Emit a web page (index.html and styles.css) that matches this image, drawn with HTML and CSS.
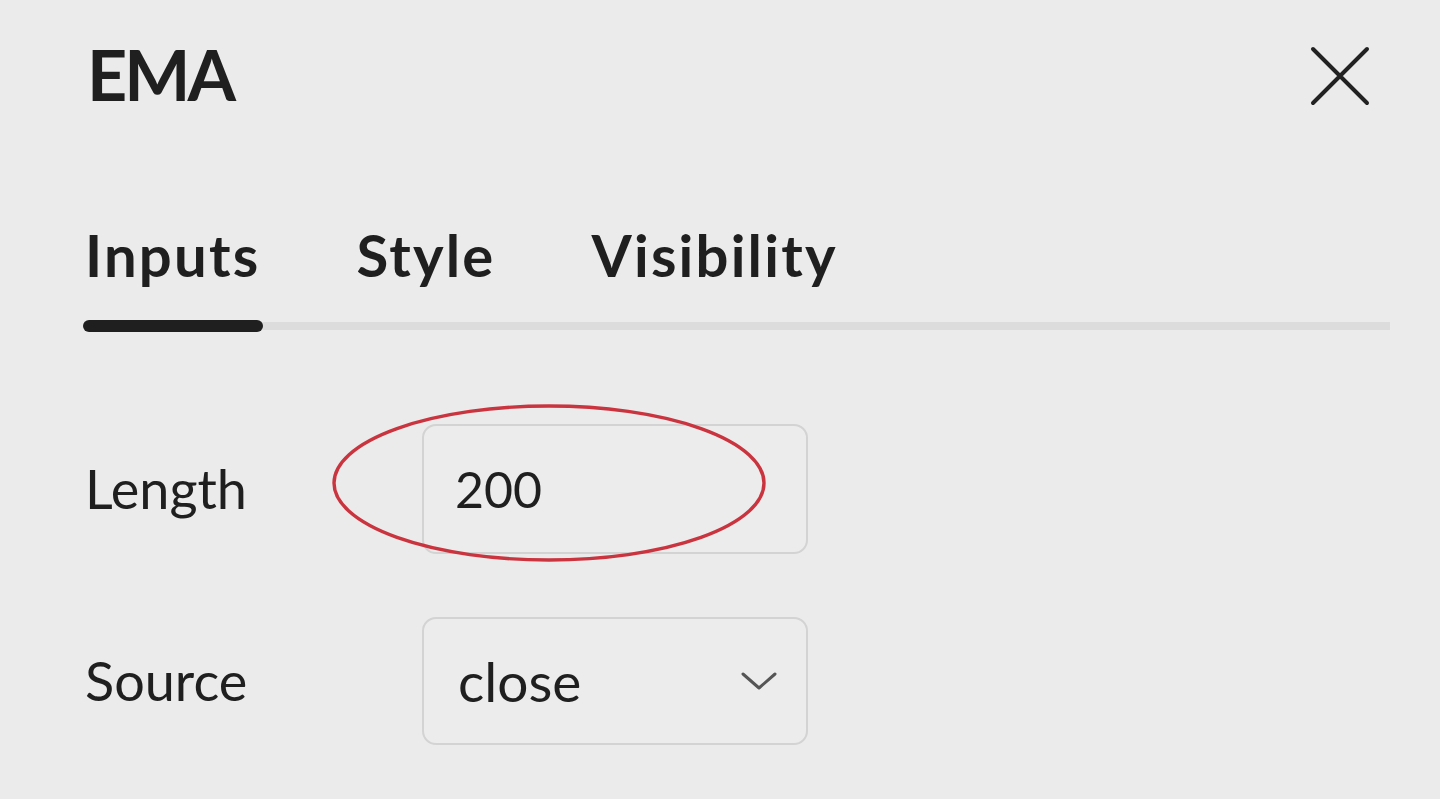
FILE: index.html
```html
<!DOCTYPE html>
<html lang="en">
<head>
    <meta charset="UTF-8">
    <meta name="viewport" content="width=device-width, initial-scale=1.0">
    <title>EMA Settings</title>
    <link rel="stylesheet" href="styles.css">
</head>
<body>
    <div class="dialog">
        <div class="header">
            <h1 class="title">EMA</h1>
            <button class="close" aria-label="Close">
                <svg width="60" height="60" viewBox="0 0 60 60">
                    <path d="M3 3 L57 57 M57 3 L3 57" stroke="#222" stroke-width="4" stroke-linecap="round" fill="none"/>
                </svg>
            </button>
        </div>

        <div class="tabs">
            <div class="tab active">Inputs</div>
            <div class="tab">Style</div>
            <div class="tab">Visibility</div>
        </div>

        <div class="rows">
            <div class="row">
                <label class="label" for="length">Length</label>
                <div class="field">
                    <input class="input" type="text" id="length" value="200">
                    <svg class="mark" width="436" height="160" viewBox="0 0 436 160">
                        <ellipse cx="218" cy="80" rx="215" ry="77" fill="none" stroke="#c9343f" stroke-width="3.4"/>
                    </svg>
                </div>
            </div>
            <div class="row">
                <div class="label">Source</div>
                <div class="field">
                    <div class="select">
                        <span>close</span>
                        <svg width="36" height="20" viewBox="0 0 36 20">
                            <path d="M2 3 L18 17 L34 3" stroke="#555" stroke-width="3" stroke-linecap="round" stroke-linejoin="round" fill="none"/>
                        </svg>
                    </div>
                </div>
            </div>
        </div>
    </div>
</body>
</html>
```

FILE: styles.css
```css
* {
  margin: 0;
  padding: 0;
  box-sizing: border-box;
}

body {
    font-family: Lato, "Open Sans", sans-serif;
    background-color: #ebebeb;
    color: #1f1f1f;
    width: 1440px;
    height: 799px;
    overflow: hidden;
}

.dialog {
    padding: 0 50px 0 84px;
}

.header {
    display: flex;
    justify-content: space-between;
    align-items: center;
    height: 150px;
}

.title {
    font-size: 70px;
    font-weight: 700;
    line-height: 1;
    letter-spacing: -3px;
    margin-left: 3px;
    margin-top: -2px;
}

.close {
    background: none;
    border: none;
    width: 60px;
    height: 60px;
    margin-right: 20px;
    margin-top: 2px;
    display: flex;
}

.tabs {
    display: flex;
    gap: 95px;
    margin-top: 76px;
    background: linear-gradient(#dcdcdc, #dcdcdc) no-repeat left bottom 2px / 100% 8px;
}

.tab {
    font-size: 58px;
    font-weight: 700;
    line-height: 1;
    letter-spacing: 2.2px;
    padding: 0 0 36px 1px;
}

.tab.active {
    padding-bottom: 0;
}

.tab.active::after {
    content: "";
    display: block;
    height: 12px;
    margin: 36px -3px 0 -2px;
    border-radius: 6px;
    background-color: #1f1f1f;
}

.rows {
    display: flex;
    flex-direction: column;
    gap: 63px;
    margin-top: 92px;
}

.row {
    display: grid;
    grid-template-columns: 338px 386px;
    align-items: center;
}

.label {
    font-size: 54px;
    line-height: 1;
    padding-left: 1px;
}

.input,
.select {
    display: flex;
    align-items: center;
    width: 386px;
    height: 130px;
    padding: 0 29px 0 32px;
    font-family: inherit;
    font-size: 55px;
    color: #1f1f1f;
    background-color: #ececec;
    border: 2px solid #d3d3d3;
    border-radius: 14px;
    outline: none;
}

.input {
    font-size: 50px;
    padding-left: 31px;
}

.select {
    justify-content: space-between;
    height: 128px;
    padding-left: 34px;
}

.field {
    position: relative;
}

.mark {
    position: absolute;
    left: -91px;
    top: -21px;
    pointer-events: none;
}
```
